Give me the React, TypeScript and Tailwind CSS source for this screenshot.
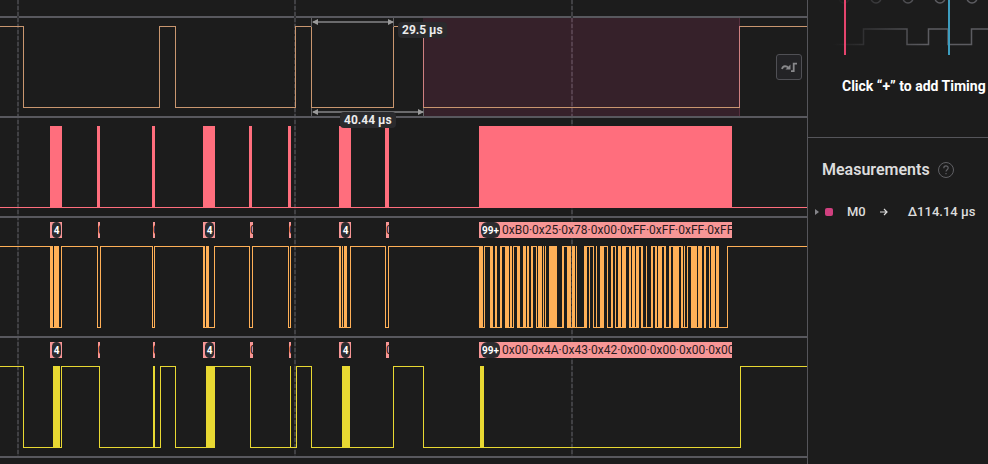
// Logic analyzer view: stacked channel traces and the timing/measurement panel.

type Block = [start: number, width: number];

// Grid markers, in timeline pixels
const gridLines = [17, 294, 571];

const pulses: Block[] = [
  [50, 12],
  [97, 3],
  [152, 3],
  [203, 12],
  [249, 3],
  [288, 3],
  [339, 12],
  [385, 4],
  [479, 253],
];

const rxBlocks: Block[] = [
  [50, 3], [54, 5], [61, 1], [97, 1], [100, 1], [152, 1], [154, 1],
  [203, 2], [206, 3], [214, 1], [249, 1], [252, 1], [288, 1], [290, 1],
  [339, 2], [342, 1], [344, 3], [350, 1], [385, 1], [388, 1],
  [479, 4], [484, 1], [490, 3], [495, 2], [500, 2], [505, 4], [510, 2],
  [513, 1], [517, 3], [523, 3], [527, 2], [531, 2], [536, 1], [538, 4],
  [543, 1], [545, 1], [549, 8], [562, 2], [567, 4], [572, 3], [576, 1],
  [584, 3], [589, 1], [593, 1], [596, 1], [600, 4], [607, 1], [611, 2],
  [615, 1], [618, 3], [622, 4], [629, 2], [632, 3], [636, 3], [641, 2],
  [646, 1], [651, 2], [655, 2], [658, 4], [664, 2], [669, 2], [673, 6],
  [681, 2], [684, 1], [687, 1], [691, 6], [698, 4], [704, 2], [709, 1],
  [711, 4], [716, 3], [727, 1],
];

const rxHigh: Block[] = [
  [0, 50], [61, 37], [100, 53], [154, 49], [214, 36], [252, 37], [290, 49],
  [350, 36], [388, 91], [484, 9], [500, 9], [513, 7], [523, 3], [531, 6],
  [562, 9], [584, 6], [589, 5], [600, 8], [612, 4], [625, 5],
  [638, 3], [651, 5], [661, 3], [669, 4], [678, 3], [687, 4], [704, 6],
  [727, 80],
];

const rxLow: Block[] = [
  [50, 12], [97, 4], [152, 3], [203, 12], [249, 4], [288, 3], [339, 12],
  [385, 4], [479, 6], [492, 9], [508, 6], [519, 5], [525, 7], [536, 27],
  [570, 15], [593, 8], [607, 5], [615, 4], [620, 3],
  [629, 9], [641, 11], [655, 4], [664, 6], [673, 4], [681, 7], [691, 10],
  [709, 19],
];

const txBlocks: Block[] = [
  [53, 7],
  [153, 2],
  [206, 9],
  [290, 1],
  [342, 8],
  [480, 4],
];

const gridTile = "repeating-linear-gradient(to bottom, #4a4a4e 0 4px, #2a2a2c 4px 6px)";

type Frame = { x: number; width: number; count?: string; text?: string };

const shortFrames: Frame[] = [
  { x: 50, width: 12, count: "4" },
  { x: 98, width: 2, text: "0" },
  { x: 153, width: 2, text: "0" },
  { x: 203, width: 12, count: "4" },
  { x: 250, width: 3, text: "0" },
  { x: 289, width: 2, text: "0" },
  { x: 339, width: 12, count: "4" },
  { x: 386, width: 3, text: "0" },
];

function Blocks({ items, y, height, fill }: { items: Block[]; y: number; height: number; fill: string }) {
  return (
    <g fill={fill}>
      {items.map(([x, w]) => (
        <rect key={x} x={x} y={y} width={w} height={height} />
      ))}
    </g>
  );
}

function Frames({ data }: { data: string }) {
  const frames = [...shortFrames, { x: 479, width: 253, count: "99+", text: data }];
  return (
    <div className="relative h-5">
      {frames.map((f) => (
        <div
          key={f.x}
          className="absolute top-1 flex h-4 items-center overflow-hidden bg-[#f79696] text-xs leading-4 whitespace-nowrap text-[#2b1c1e]"
          style={{ left: f.x, width: f.width }}
        >
          {f.count && (
            <span
              className={
                f.text
                  ? "mr-0.5 ml-0.5 h-4 w-[19px] shrink-0 rounded-md bg-[#2b2b2f] text-center text-[10px] leading-[17px] font-bold text-white"
                  : "ml-0.5 h-4 w-[9px] shrink-0 rounded-md bg-[#2b2b2f] text-center text-[10px] leading-[17px] font-bold text-white"
              }
            >
              {f.count}
            </span>
          )}
          {f.text && <span className="shrink-0">{f.text}</span>}
        </div>
      ))}
    </div>
  );
}

function ClockRow() {
  return (
    <div className="relative h-[100px] border-b-2 border-[#58585e]">
      <div className="absolute inset-y-0 left-[423px] w-[317px] border-r border-[#57303e] bg-[#e54488]/13" />
      <svg className="absolute inset-0 h-full w-full" shapeRendering="crispEdges">
        <path
          d="M0 8.5H23.5V89.5H159.5V8.5H175.5V89.5H295.5V8.5H311.5V89.5H393.5V8.5H423.5V89.5H739.5V8.5H2000"
          fill="none"
          stroke="#c9966f"
        />
        <path d="M423.5 8V89M739.5 89V8" fill="none" stroke="#cf8080" />
        <path d="M311.5 0V9M393.5 0V9M311.5 90V98M423.5 90V98" stroke="#626264" />
        <path d="M313 4H393M313 94H423" stroke="#6a6a6c" strokeWidth="2" />
        <path
          d="M312 4l6-3v6zM394 4l-6-3v6zM312 94l6-3v6zM424 94l-6-3v6z"
          fill="#9a9a9a"
          shapeRendering="auto"
        />
      </svg>
      <span className="absolute top-1 left-[398px] z-20 rounded-sm bg-[#2a2a2d] px-1 text-xs leading-4 font-bold text-[#ececec]">
        29.5 µs
      </span>
      <span className="absolute top-[94px] left-[340px] z-20 rounded-sm bg-[#2a2a2d] px-1 text-xs leading-4 font-bold text-[#ececec]">
        40.44 µs
      </span>
      <button
        aria-label="Add trigger"
        className="absolute top-9 right-[5px] flex size-[26px] items-center justify-center rounded-[3px] border border-[#505055] bg-[#232326]"
      >
        <svg width="16" height="12" viewBox="0 0 16 12" fill="none" stroke="#88888b" strokeWidth="1.8">
          <path d="M1 8C2 4.500 5.500 4.500 7.500 7M10 10.200H12.700V2.700H16" />
          <path d="M9.500 3.500v5h-5z" fill="#88888b" stroke="none" />
        </svg>
      </button>
    </div>
  );
}

function HelpIcon() {
  return (
    <svg width="16" height="16" viewBox="0 0 16 16" fill="none" stroke="#606064">
      <circle cx="8" cy="8" r="7.500" />
      <path d="M5.800 6.200C5.800 3.200 10.200 3.300 10.200 6C10.200 7.600 8 7.800 8 9.500M8 11v1.200" strokeWidth="1.200" />
    </svg>
  );
}

function SidePanel() {
  return (
    <aside className="w-[181px] shrink-0 overflow-hidden border-l border-[#55555a]">
      <section className="h-[138px] border-b border-[#55555a]">
        <svg className="h-14 w-full" viewBox="0 0 180 56" fill="none">
          <defs>
            <linearGradient id="fade" gradientUnits="userSpaceOnUse" x1="25" y1="0" x2="180" y2="0">
              <stop offset="0" stopColor="#1c1c1c" />
              <stop offset="0.600" stopColor="#5c5c61" />
              <stop offset="1" stopColor="#5c5c61" />
            </linearGradient>
          </defs>
          <g stroke="url(#fade)" strokeWidth="1.500">
            <circle cx="36" cy="-2" r="5" />
            <circle cx="68" cy="-2" r="5" />
            <circle cx="100" cy="-2" r="5" />
            <circle cx="132" cy="-2" r="5" />
            <circle cx="164" cy="-2" r="5" />
            <path d="M25 44.500H55.500V29H99V44.500H120.500V29H140V44.500H163.500V29H180" />
          </g>
          <path d="M37 0V55" stroke="#e5446d" strokeWidth="2" />
          <path d="M141 0V55" stroke="#3d9dbf" strokeWidth="2" />
        </svg>
        <h2 className="mt-5 ml-[34px] text-sm leading-5 font-bold whitespace-nowrap text-white">
          Click “+” to add Timing Markers
        </h2>
      </section>
      <section className="pt-5">
        <div className="flex items-center gap-2 pl-3.5">
          <h2 className="text-base leading-6 font-semibold text-[#dcdcdc]">Measurements</h2>
          <button aria-label="Help">
            <HelpIcon />
          </button>
        </div>
        <div className="mt-5 flex items-center pl-[7px] text-[13px] leading-5 font-medium text-[#dcdcdc]">
          <svg width="4" height="6" viewBox="0 0 4 6" fill="#85858a">
            <path d="M0 0l4 3l-4 3z" />
          </svg>
          <span className="ml-1.5 size-2 rounded-xs bg-[#d0407f]" />
          <span className="ml-3.5">M0</span>
          <svg className="ml-3.5" width="8" height="8" viewBox="0 0 8 8" fill="none" stroke="#dcdcdc" strokeWidth="1.200">
            <path d="M0 4h7M4 1l3 3l-3 3" />
          </svg>
          <span className="ml-5 whitespace-nowrap">Δ114.14 µs</span>
        </div>
      </section>
    </aside>
  );
}

export default function App() {
  return (
    <div className="flex h-screen overflow-hidden bg-[#1c1c1c] font-['Roboto',sans-serif]">
      <main className="relative min-w-0 flex-1 overflow-hidden">
        {gridLines.map((x) => (
          <div
            key={x}
            className="absolute top-0 h-[458px] w-0.5 opacity-80"
            style={{ left: x, backgroundImage: gridTile }}
          />
        ))}
        <div className="h-[18px] border-b-2 border-[#58585e]" />
        <ClockRow />
        <div className="relative h-[100px] border-b-2 border-[#58585e]">
          <svg className="h-full w-full" shapeRendering="crispEdges">
            <path d="M0 89.500H2000" stroke="#ff6e7d" />
            <Blocks items={pulses} y={8} height={82} fill="#ff6e7d" />
          </svg>
        </div>
        <div className="relative h-[120px] border-b-2 border-[#58585e]">
          <Frames data="0xB0·0x25·0x78·0x00·0xFF·0xFF·0xFF·0xFF" />
          <svg className="h-[98px] w-full" shapeRendering="crispEdges">
            <Blocks items={rxBlocks} y={8} height={82} fill="#ffb057" />
            <Blocks items={rxHigh} y={8} height={1} fill="#ffb057" />
            <Blocks items={rxLow} y={89} height={1} fill="#ffb057" />
          </svg>
        </div>
        <div className="relative h-[120px] border-b-2 border-[#58585e]">
          <Frames data="0x00·0x4A·0x43·0x42·0x00·0x00·0x00·0x00" />
          <svg className="h-[98px] w-full" shapeRendering="crispEdges">
            <path
              d="M0 8.500H23.500V89.500H61.500V8.500H99.500V89.500H160.500V8.500H175.500V89.500H214.500V8.500H250.500V89.500H296.500V8.500H311.500V89.500H393.500V8.500H423.500V89.500H740.500V8.500H2000"
              fill="none"
              stroke="#e8d832"
            />
            <Blocks items={txBlocks} y={8} height={82} fill="#e8d832" />
          </svg>
        </div>
      </main>
      <SidePanel />
    </div>
  );
}
